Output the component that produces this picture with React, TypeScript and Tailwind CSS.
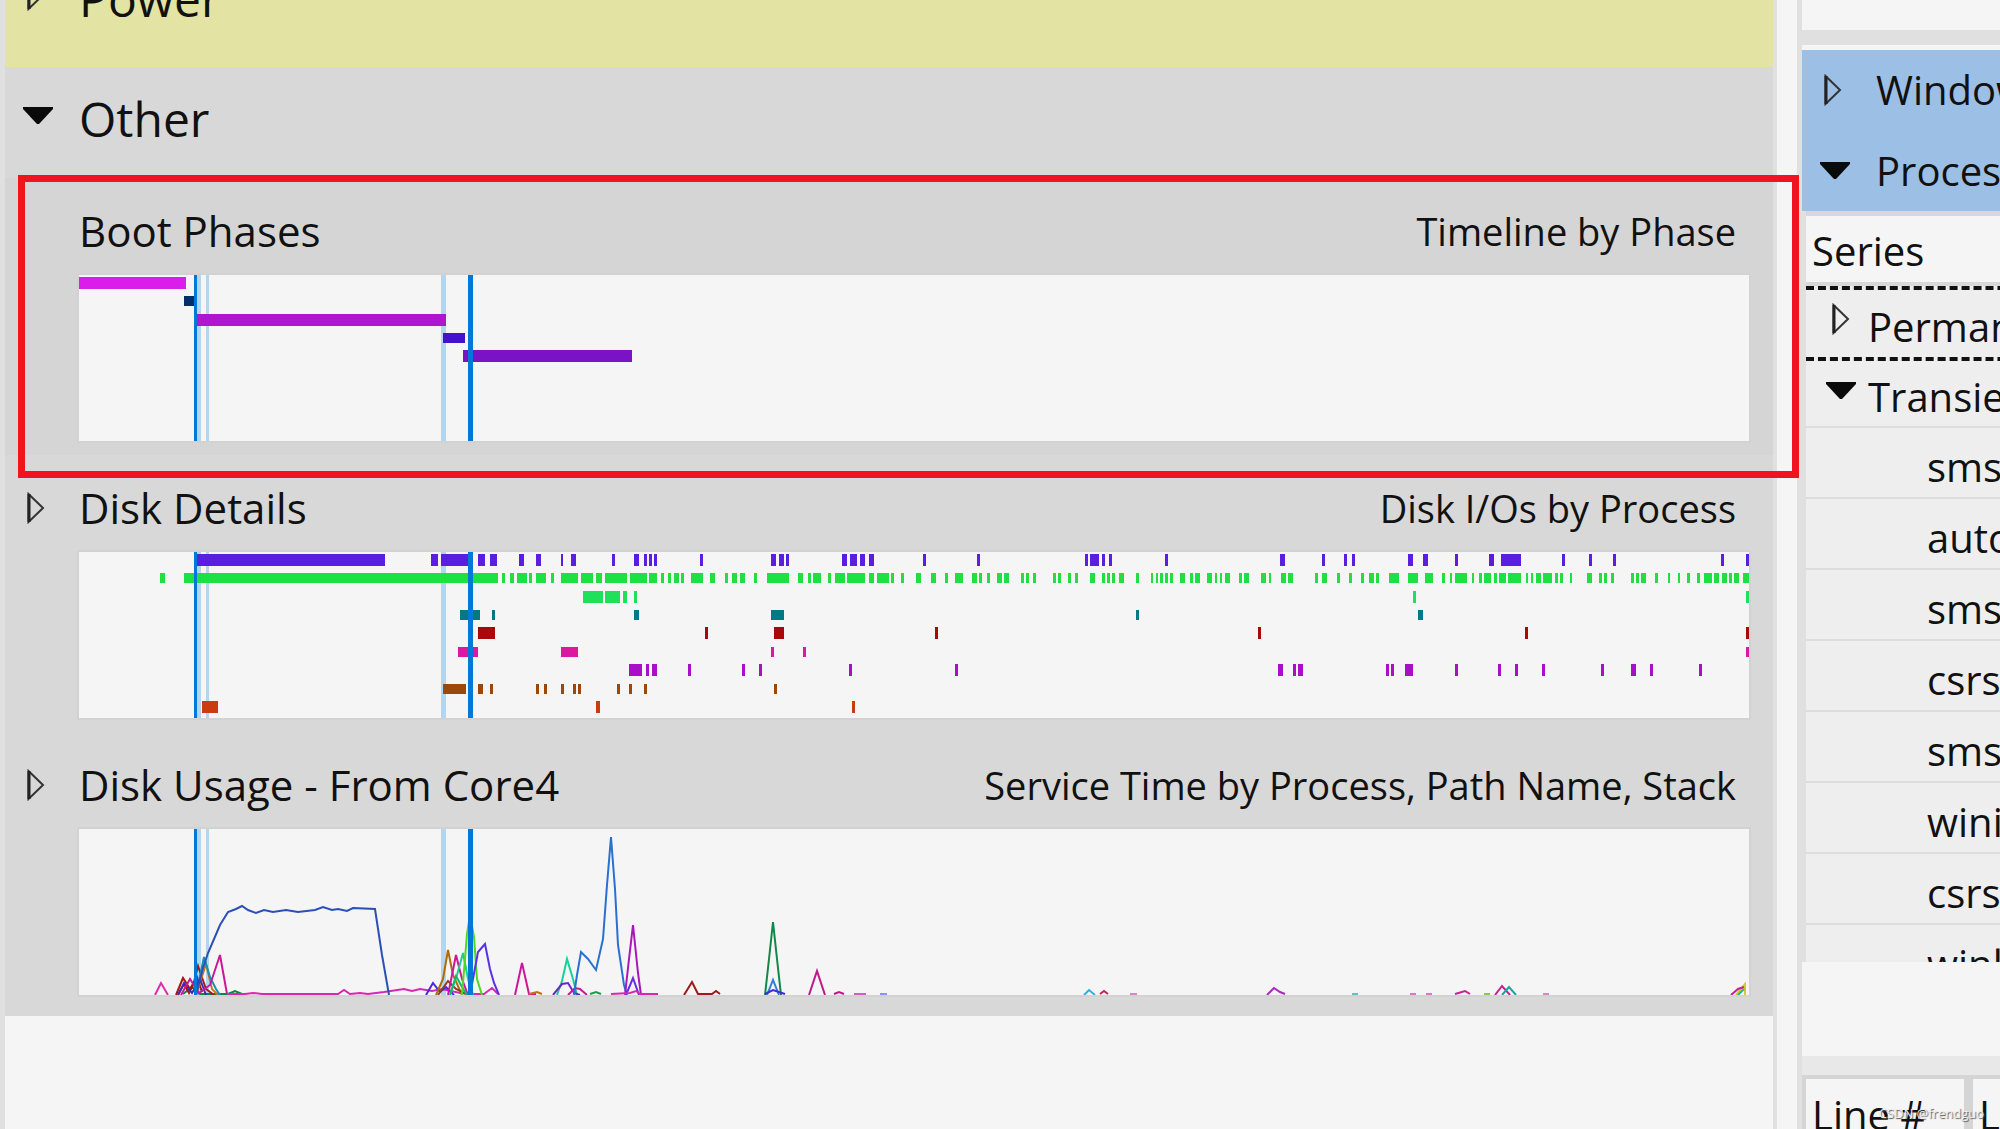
import type { ReactNode } from "react";

type Span = [number, number];
type Lane = { color: string; spans: Span[] };
type Line = { color: string; points: string };

/* Lane tops and heights inside a 166px high chart */
const LANES: Span[] = [
  [2, 12], [21, 10], [39, 12], [58, 10], [75, 12], [95, 10], [112, 12], [132, 10], [149, 12],
];

const bootLanes: Lane[] = [
  { color: "#d81ee8", spans: [[79, 186]] },
  { color: "#002f6c", spans: [[184, 194]] },
  { color: "#b015d0", spans: [[196, 446]] },
  { color: "#4512cc", spans: [[443, 465]] },
  { color: "#7a12c6", spans: [[463, 632]] },
];

const diskLanes: Lane[] = [
  {
    color: "#5a1ee0",
    spans: [
      [197, 385], [431, 438], [441, 468], [478, 485], [490, 497], [519, 524], [536, 541], [561, 563], [571, 576],
      [612, 615], [634, 639], [644, 647], [649, 652], [654, 657], [700, 703], [771, 776], [779, 784], [786, 789],
      [842, 847], [850, 857], [860, 865], [869, 874], [923, 926], [977, 980], [1085, 1088], [1090, 1099],
      [1102, 1105], [1109, 1112], [1165, 1168], [1280, 1285], [1322, 1325], [1344, 1347], [1352, 1355],
      [1408, 1413], [1423, 1428], [1455, 1458], [1489, 1494], [1501, 1521], [1562, 1565], [1589, 1592],
      [1613, 1616], [1721, 1724], [1746, 1749],
    ],
  },
  {
    color: "#1ee040",
    spans: [
      [160, 165], [184, 498], [502, 505], [510, 514], [517, 527], [529, 532], [536, 546], [551, 554], [561, 578],
      [581, 593], [596, 602], [605, 627], [630, 647], [649, 657], [661, 664], [668, 671], [674, 679], [681, 684],
      [691, 703], [710, 715], [725, 728], [732, 737], [740, 745], [754, 757], [767, 789], [798, 803], [808, 811],
      [813, 821], [828, 831], [835, 845], [847, 865], [869, 874], [877, 889], [891, 894], [901, 904], [916, 921],
      [931, 936], [945, 948], [955, 963], [972, 977], [979, 982], [987, 990], [997, 1002], [1004, 1009],
      [1021, 1024], [1026, 1029], [1033, 1036], [1053, 1056], [1058, 1061], [1068, 1071], [1075, 1078],
      [1090, 1095], [1102, 1105], [1107, 1110], [1112, 1115], [1119, 1124], [1136, 1139], [1151, 1153],
      [1156, 1158], [1160, 1163], [1165, 1168], [1170, 1173], [1180, 1185], [1190, 1193], [1195, 1200],
      [1207, 1212], [1215, 1217], [1220, 1222], [1225, 1230], [1239, 1242], [1244, 1249], [1261, 1266],
      [1269, 1271], [1281, 1286], [1288, 1293], [1315, 1318], [1322, 1327], [1337, 1340], [1349, 1352],
      [1361, 1364], [1369, 1374], [1376, 1379], [1389, 1399], [1408, 1418], [1425, 1433], [1442, 1445],
      [1450, 1452], [1455, 1467], [1472, 1474], [1479, 1482], [1484, 1491], [1494, 1497], [1499, 1506],
      [1508, 1521], [1526, 1528], [1531, 1533], [1536, 1541], [1543, 1552], [1555, 1558], [1560, 1563],
      [1570, 1572], [1587, 1592], [1599, 1602], [1604, 1607], [1611, 1614], [1631, 1634], [1636, 1639],
      [1641, 1646], [1655, 1658], [1668, 1670], [1678, 1680], [1687, 1690], [1697, 1700], [1704, 1712],
      [1714, 1719], [1722, 1727], [1729, 1732], [1734, 1739], [1743, 1749],
    ],
  },
  { color: "#1ee05a", spans: [[583, 603], [605, 620], [623, 627], [634, 637], [1413, 1416], [1746, 1749]] },
  { color: "#007888", spans: [[460, 480], [492, 495], [634, 639], [771, 784], [1136, 1139], [1418, 1423]] },
  {
    color: "#a80808",
    spans: [[478, 495], [705, 708], [774, 784], [935, 938], [1258, 1261], [1525, 1528], [1746, 1749]],
  },
  { color: "#dd18a0", spans: [[458, 478], [561, 578], [771, 774], [803, 806], [1746, 1749]] },
  {
    color: "#a810c8",
    spans: [
      [629, 642], [646, 649], [652, 657], [688, 691], [742, 745], [759, 762], [849, 852], [955, 958],
      [1278, 1283], [1293, 1296], [1298, 1303], [1386, 1389], [1391, 1394], [1405, 1413], [1455, 1458],
      [1498, 1501], [1515, 1518], [1542, 1545], [1601, 1604], [1631, 1636], [1650, 1653], [1699, 1702],
    ],
  },
  {
    color: "#9c4808",
    spans: [
      [443, 466], [478, 483], [490, 493], [536, 539], [544, 547], [561, 564], [573, 576], [578, 581],
      [617, 620], [629, 632], [644, 647], [774, 777],
    ],
  },
  { color: "#c83c10", spans: [[202, 218], [596, 600], [852, 855]] },
];

const usageLines: Line[] = [
  { color: "#008a45", points: "183,165 192,158 200,165 228,165 235,162 242,165" },
  { color: "#a01818", points: "176,166 183,149 190,160 194,153 198,137 206,160 214,166" },
  { color: "#a01818", points: "178,166 184,155 189,164 197,148 202,163" },
  { color: "#a01818", points: "684,166 692,153 698,165 712,165 716,162 720,165" },
  { color: "#c87818", points: "196,166 206,135 212,160 218,166" },
  { color: "#1890b8", points: "196,166 204,128 210,148 216,160 220,166" },
  { color: "#3a2ac0", points: "178,166 184,154 192,164 200,150 206,166" },
  { color: "#cc1898", points: "181,166 190,150 199,164 210,156 220,126 227,165" },
  { color: "#e02ab0", points: "155,166 161,154 168,166" },
  {
    color: "#d828b0",
    points:
      "227,165 245,165 253,164 262,165 338,165 344,161 350,165 360,164 368,165 384,163 404,160 412,162 420,160 432,162 442,160 460,164 472,165 484,165 492,159 498,165",
  },
  {
    color: "#2a50b8",
    points:
      "196,166 203,139 208,124 220,96 228,83 236,80 242,77 248,81 256,84 264,81 273,83 286,81 298,83 315,81 323,78 332,81 338,80 347,82 353,79 375,80 382,126 389,166",
  },
  { color: "#4828e0", points: "426,166 433,154 440,163 446,158 454,166" },
  { color: "#b06c08", points: "436,166 443,150 448,121 453,146 462,166" },
  { color: "#904018", points: "438,166 448,152 456,160 468,166" },
  { color: "#cc1898", points: "448,166 452,146 456,126 462,150 468,166" },
  { color: "#18d090", points: "450,166 457,146 463,124 468,150 473,166" },
  { color: "#10b870", points: "450,166 456,147 462,158 467,166" },
  { color: "#50d820", points: "462,166 467,105 470,86 474,108 477,150 482,166" },
  { color: "#5a30e8", points: "470,166 478,123 485,115 490,140 494,154 499,166" },
  { color: "#cc1898", points: "515,166 522,134 529,165 536,165" },
  { color: "#18d098", points: "557,166 562,152 567,130 573,150 577,166" },
  { color: "#6a28c0", points: "553,166 562,155 568,154 574,164 580,166" },
  { color: "#cc1898", points: "568,166 575,159 580,160 587,166" },
  { color: "#c07018", points: "529,165 537,163 542,165" },
  { color: "#18a050", points: "590,165 596,163 601,165" },
  { color: "#2a70d0", points: "574,166 577,146 581,123 588,130 596,141 603,110 607,56 611,8 615,60 618,116 624,156 627,166" },
  { color: "#a818b8", points: "625,166 629,130 633,96 638,144 641,166" },
  { color: "#6030e8", points: "626,166 633,149 639,166" },
  { color: "#d828b0", points: "611,165 630,164 636,162 640,165 658,165" },
  { color: "#108848", points: "765,166 769,130 773,93 777,130 781,166" },
  { color: "#3080d8", points: "767,166 773,151 779,166" },
  { color: "#4828d0", points: "765,165 773,161 785,165" },
  { color: "#c01888", points: "809,166 817,142 825,166" },
  { color: "#c01888", points: "834,165 839,163 844,165" },
  { color: "#d060c0", points: "854,165 866,165" },
  { color: "#9090f0", points: "880,165 887,165" },
  { color: "#30b0e0", points: "1084,166 1089,161 1095,166" },
  { color: "#c82050", points: "1100,165 1104,162 1108,165" },
  { color: "#e080d0", points: "1130,165 1137,165" },
  { color: "#a828c8", points: "1267,166 1274,159 1280,163 1285,165" },
  { color: "#60c0c8", points: "1352,165 1358,165" },
  { color: "#e070c8", points: "1410,165 1416,165" },
  { color: "#e070c8", points: "1426,165 1432,165" },
  { color: "#c82098", points: "1455,165 1465,162 1470,165" },
  { color: "#90c840", points: "1484,165 1490,165" },
  { color: "#c82098", points: "1495,166 1502,157 1510,166" },
  { color: "#18a898", points: "1502,166 1509,158 1516,166" },
  { color: "#e080d0", points: "1543,165 1549,165" },
  { color: "#d8c828", points: "1736,166 1745,155 1745,166" },
  { color: "#18b898", points: "1738,166 1744,160" },
  { color: "#c82098", points: "1731,166 1738,160 1744,158" },
];

function Closed() {
  return (
    <svg className="ml-1.5 h-8 w-[18px] shrink-0" viewBox="0 0 18 32" aria-hidden="true">
      <path d="M1.5 2 16 16 1.5 30Z" fill="none" stroke="#333" strokeWidth="2" />
      <path d="M2 2V30" stroke="#222" strokeWidth="3" />
    </svg>
  );
}

function Open() {
  return (
    <svg className="h-[18px] w-[30px] shrink-0" viewBox="0 0 30 18" aria-hidden="true">
      <path d="M0 0H30V2L16 17H14L0 2Z" fill="#0a0a0a" />
    </svg>
  );
}

function Chart({ label, lanes = [], lines = [] }: { label: string; lanes?: Lane[]; lines?: Line[] }) {
  return (
    <svg
      role="img"
      aria-label={label}
      className="ml-[74px] mr-6 block h-[166px] w-[calc(100%-98px)] bg-[#f5f5f5] ring-2 ring-[#d2d2d2]"
      viewBox="79 0 1670 166"
      preserveAspectRatio="none"
    >
      <g fill="#b3d6f0">
        <rect x="197" y="0" width="4" height="166" />
        <rect x="206" y="0" width="3" height="166" />
        <rect x="441" y="0" width="5" height="166" />
      </g>
      {lanes.map((lane, i) => (
        <g key={i} fill={lane.color}>
          {lane.spans.map(([from, to]) => (
            <rect key={from} x={from} y={LANES[i][0]} width={to - from} height={LANES[i][1]} />
          ))}
        </g>
      ))}
      {lines.map((line, i) => (
        <polyline key={i} points={line.points} fill="none" stroke={line.color} strokeWidth="2" />
      ))}
      <rect x="194" y="0" width="3" height="166" fill="#0078d7" />
      <rect x="468" y="0" width="5" height="166" fill="#0078d7" />
    </svg>
  );
}

function Graph({
  title,
  preset,
  expander,
  children,
}: {
  title: string;
  preset: string;
  expander?: boolean;
  children: ReactNode;
}) {
  return (
    <section className="h-[277px]">
      <header className="flex h-[97px] items-center justify-between pr-[37px] pt-2">
        <button type="button" className="flex items-center text-[42px] leading-[48px]">
          <span className="flex w-[74px] justify-start pl-4">{expander && <Closed />}</span>
          {title}
        </button>
        <span className="text-[38px] leading-[48px]">{preset}</span>
      </header>
      {children}
    </section>
  );
}

function Explorer() {
  return (
    <main className="flex min-w-0 flex-1 flex-col border-l-[5px] border-r-4 border-[#e0e0e0] text-[#111]">
      <div className="flex h-[67px] shrink-0 items-end bg-[#e3e3a3] pb-[36px]">
        <button type="button" className="flex items-center text-[48px] leading-[64px]">
          <span className="flex w-[74px] pb-2 pl-4">
            <Closed />
          </span>
          Power
        </button>
      </div>
      <div className="bg-[#d8d8d8] pb-[7px]">
        <div className="flex h-[111px] items-start pt-5">
          <button type="button" className="flex items-center text-[48px] leading-[64px]">
            <span className="flex w-[74px] pb-1.5 pl-[18px]">
              <Open />
            </span>
            Other
          </button>
        </div>
        <div className="relative bg-[#d5d5d5]">
          <Graph title="Boot Phases" preset="Timeline by Phase">
            <Chart label="Boot phases timeline" lanes={bootLanes} />
          </Graph>
          <div className="pointer-events-none absolute -bottom-[23px] -right-[26px] -top-[3px] left-[13px] z-10 border-[7px] border-[#f0141e]" />
        </div>
        <Graph title="Disk Details" preset="Disk I/Os by Process" expander>
          <Chart label="Disk I/Os by process" lanes={diskLanes} />
        </Graph>
        <Graph title="Disk Usage - From Core4" preset="Service Time by Process, Path Name, Stack" expander>
          <Chart label="Disk service time" lines={usageLines} />
        </Graph>
      </div>
    </main>
  );
}

const processes = [
  "smss.exe",
  "autochk.exe",
  "smss.exe",
  "csrss.exe",
  "smss.exe",
  "wininit.exe",
  "csrss.exe",
  "winlogon.exe",
];

function Analysis() {
  return (
    <aside className="ml-5 flex w-[203px] shrink-0 flex-col overflow-hidden whitespace-nowrap border-l-[5px] border-[#e0e0e0] text-[40px] leading-[48px] text-[#111]">
      <div className="h-[30px] shrink-0" />
      <div className="mb-[5px] h-[15px] shrink-0 bg-[#e0e0e0]" />
      <div className="bg-[#9bbfe5]">
        <button type="button" className="flex h-20 w-full items-center">
          <span className="flex w-[74px] shrink-0 pl-4">
            <Closed />
          </span>
          Windows
        </button>
        <button type="button" className="flex h-[81px] w-full items-center">
          <span className="flex w-[74px] shrink-0 pl-[18px]">
            <Open />
          </span>
          Processes
        </button>
      </div>
      <div className="h-[751px] shrink-0 overflow-hidden border-l-4 border-[#e0e0e0]">
        <table className="w-full border-separate border-spacing-0 bg-[#eeeeee]">
          <thead>
            <tr>
              <th className="h-[75px] border-b-4 border-t-[5px] border-[#d8d8d8] bg-[#f5f5f5] p-0 pl-1.5 pt-1 text-left font-normal">
                Series
              </th>
            </tr>
          </thead>
          <tbody>
            <tr>
              <td className="h-[75px] border-y-4 border-dashed border-[#111] p-0 pl-5 pt-1.5">
                <button type="button" className="flex items-center">
                  <span className="flex w-[42px] shrink-0 pb-4">
                    <Closed />
                  </span>
                  Permanent
                </button>
              </td>
            </tr>
            <tr>
              <td className="h-[67px] border-b-2 border-[#dddddd] p-0 pl-5 pt-1.5">
                <button type="button" className="flex items-center">
                  <span className="flex w-[42px] shrink-0 pb-3">
                    <Open />
                  </span>
                  Transient
                </button>
              </td>
            </tr>
            {processes.map((name, i) => (
              <tr key={i}>
                <td className="h-[71px] border-b-2 border-[#dddddd] p-0 pl-[121px] pt-2">{name}</td>
              </tr>
            ))}
          </tbody>
        </table>
      </div>
      <div className="h-[94px] shrink-0" />
      <div className="h-[19px] shrink-0 bg-[#e8e8e8]" />
      <div className="flex h-20 shrink-0 gap-[9px] border-l-4 border-t-4 border-[#d5d5d5] bg-[#d5d5d5]">
        <div className="w-[158px] bg-[#f5f5f5] pl-1.5 pt-3">Line #</div>
        <div className="flex-1 bg-[#f5f5f5] pl-1.5 pt-3">L</div>
      </div>
    </aside>
  );
}

export default function App() {
  return (
    <div className="relative flex h-screen overflow-hidden bg-[#f5f5f5] font-['Open_Sans',sans-serif]">
      <Explorer />
      <Analysis />
      <span className="absolute bottom-2 right-4 text-[13px] leading-4 text-[#eeeeee] [text-shadow:1px_1px_1px_#555]">
        CSDN @frendguo
      </span>
    </div>
  );
}
